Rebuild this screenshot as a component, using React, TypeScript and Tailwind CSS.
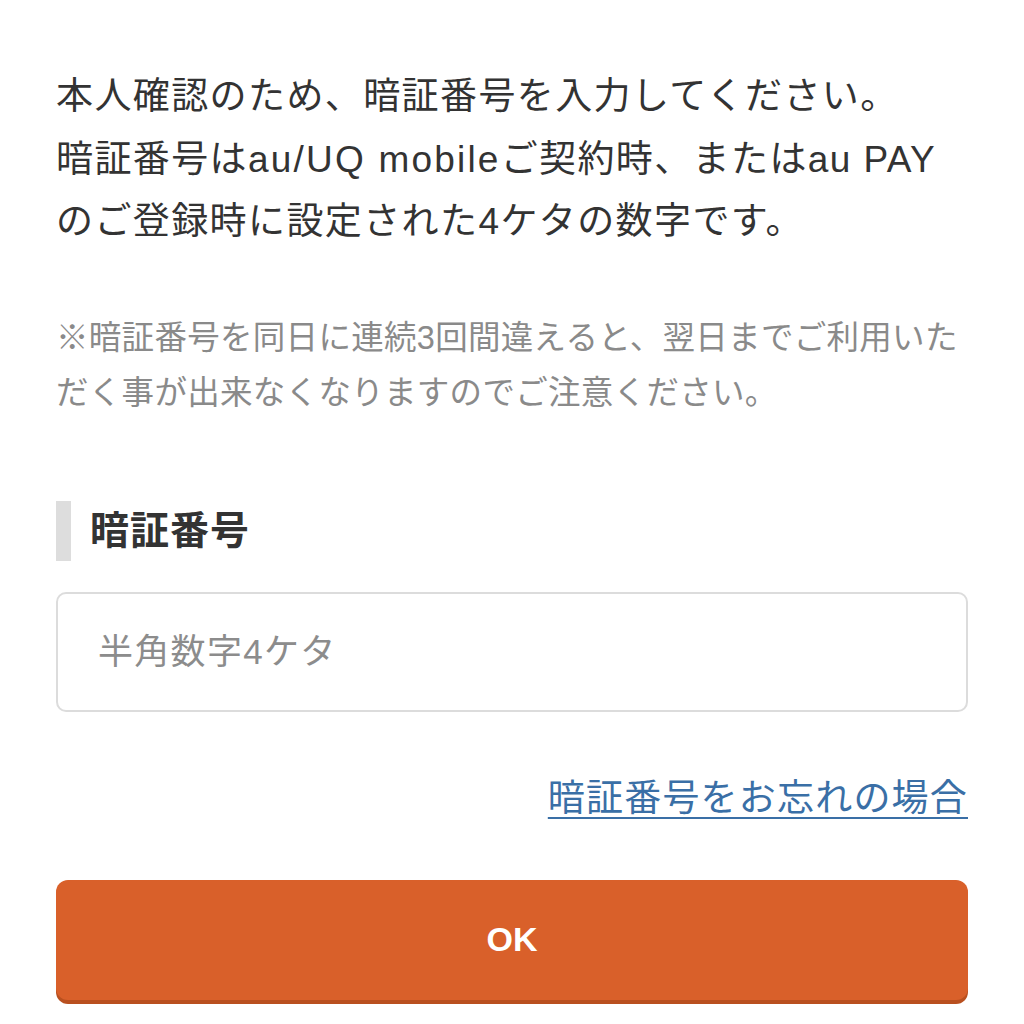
export default function App() {
  return (
    <div
      className="min-h-screen bg-white px-[56px] pt-[66px] text-[#333]"
      style={{ fontFamily: '"Liberation Sans", "Noto Sans CJK JP", sans-serif' }}
    >
      <p className="text-[37px] leading-[62.5px] tracking-[1.4px]">
        本人確認のため、暗証番号を入力してください。
        <br />
        暗証番号は<span className="tracking-[2.2px]">au/UQ mobile</span>ご契約時、またはau PAY
        <br />
        のご登録時に設定された4ケタの数字です。
      </p>

      <p className="mt-[57px] text-[32.5px] leading-[55px] tracking-[0.3px] text-[#8a8a8a]">
        ※暗証番号を同日に連続3回間違えると、翌日までご利用いただく事が出来なくなりますのでご注意ください。
      </p>

      <div className="mt-[80px] flex h-[60px] items-center gap-[19px]">
        <div className="h-full w-[15px] bg-[#dddddd]" />
        <h2 className="text-[39px] font-bold leading-none tracking-[1px] text-[#333]">暗証番号</h2>
      </div>

      <input
        type="text"
        placeholder="半角数字4ケタ"
        className="mt-[31px] block h-[120px] w-full rounded-[10px] border-2 border-[#dcdcdc] px-[40px] text-[35px] tracking-[1.3px] text-[#333] outline-none placeholder:text-[#8c8c8c]"
      />

      <div className="mt-[62px] flex justify-end">
        <a className="text-[37px] leading-[50px] tracking-[1.2px] text-[#3a6fa6] underline decoration-2 underline-offset-[6px]">
          暗証番号をお忘れの場合
        </a>
      </div>

      <button className="mt-[56px] flex h-[120px] w-full items-center justify-center rounded-[12px] bg-[#d9602a] text-[34px] font-bold text-white shadow-[0_4px_0_#b9501f]">
        OK
      </button>
    </div>
  )
}
